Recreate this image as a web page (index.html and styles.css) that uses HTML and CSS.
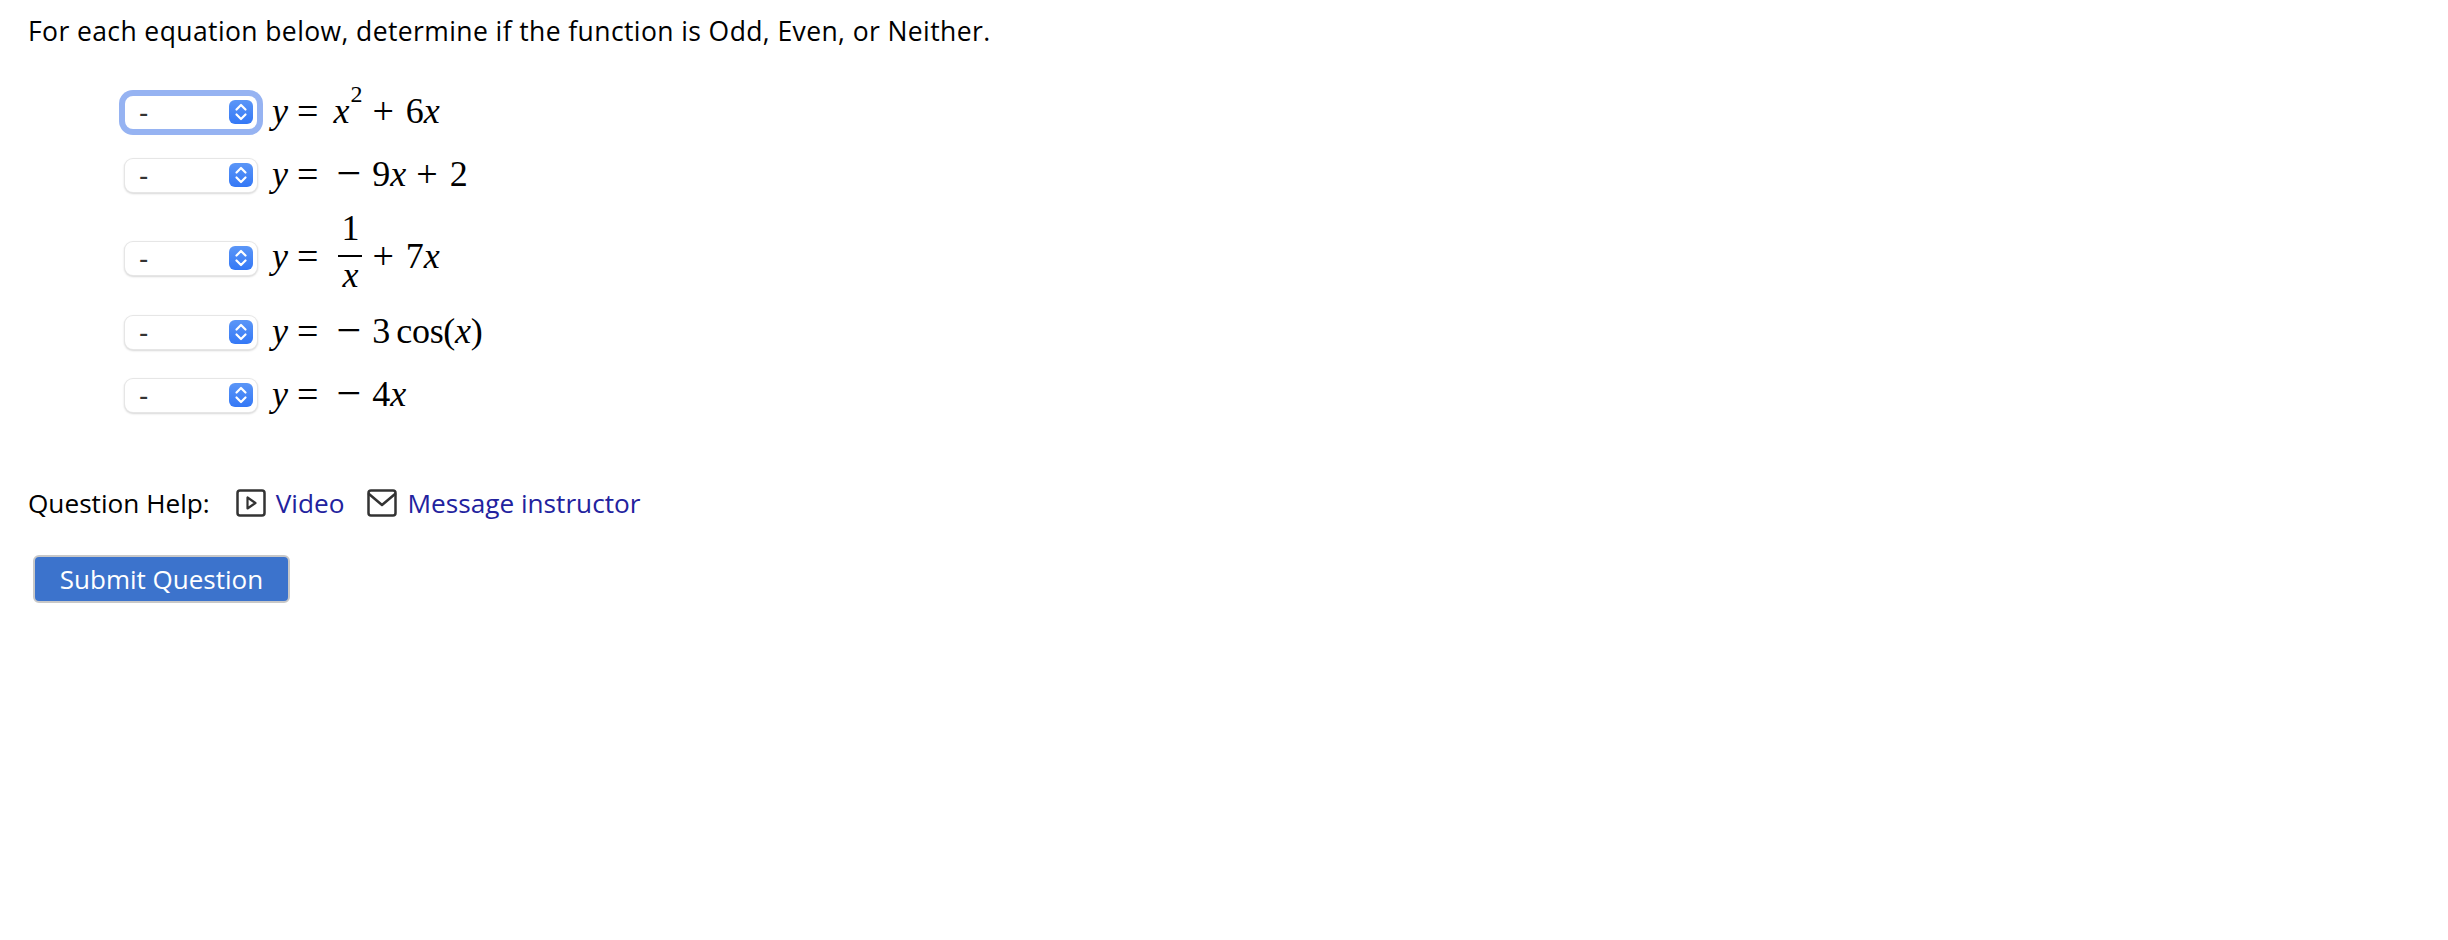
FILE: index.html
```html
<!DOCTYPE html>
<html lang="en">
<head>
<meta charset="utf-8">
<title>Question</title>
<link rel="stylesheet" href="styles.css">
</head>
<body>
<main class="page">
  <p class="prompt">For each equation below, determine if the function is Odd, Even, or Neither.</p>
  <ul class="eqs">
    <li class="eq">
      <span class="pick focused"><select><option>-</option></select><span class="stepper"><svg viewBox="0 0 24 24"><path d="M7.5 9.5 12 5l4.5 4.5M7.5 14.5 12 19l4.500-4.500"/></svg></span></span>
      <span class="math"><i>y</i><span class="rel">=</span><i>x</i><sup>2</sup><span class="bin">+</span>6<i>x</i></span>
    </li>
    <li class="eq">
      <span class="pick"><select><option>-</option></select><span class="stepper"><svg viewBox="0 0 24 24"><path d="M7.5 9.5 12 5l4.500 4.500M7.500 14.500 12 19l4.500-4.500"/></svg></span></span>
      <span class="math"><i>y</i><span class="rel">=</span><span class="neg">−</span>9<i>x</i><span class="bin">+</span>2</span>
    </li>
    <li class="eq tall">
      <span class="pick"><select><option>-</option></select><span class="stepper"><svg viewBox="0 0 24 24"><path d="M7.500 9.500 12 5l4.500 4.500M7.500 14.500 12 19l4.500-4.500"/></svg></span></span>
      <span class="math"><i>y</i><span class="rel">=</span><span class="frac"><span class="num">1</span><span class="den"><i>x</i></span></span><span class="bin">+</span>7<i>x</i></span>
    </li>
    <li class="eq">
      <span class="pick"><select><option>-</option></select><span class="stepper"><svg viewBox="0 0 24 24"><path d="M7.500 9.500 12 5l4.500 4.500M7.500 14.500 12 19l4.500-4.500"/></svg></span></span>
      <span class="math"><i>y</i><span class="rel">=</span><span class="neg">−</span>3<span class="fn">cos(<i>x</i>)</span></span>
    </li>
    <li class="eq">
      <span class="pick"><select><option>-</option></select><span class="stepper"><svg viewBox="0 0 24 24"><path d="M7.500 9.500 12 5l4.500 4.500M7.500 14.500 12 19l4.500-4.500"/></svg></span></span>
      <span class="math"><i>y</i><span class="rel">=</span><span class="neg">−</span>4<i>x</i></span>
    </li>
  </ul>
  <div class="help">
    <span class="help-label">Question Help:</span>
    <a class="help-link" href="#"><svg class="ico" viewBox="0 0 30 30"><rect x="1.500" y="2.500" width="27" height="25" rx="2.500"/><path class="play" d="M11.500 9.500v11l8-5.500z"/></svg>Video</a>
    <a class="help-link" href="#"><svg class="ico" viewBox="0 0 30 30"><rect x="1.500" y="2.500" width="27" height="25" rx="2.500"/><path d="M2 6l13 11L28 6"/></svg>Message instructor</a>
  </div>
  <button class="submit" type="button">Submit Question</button>
</main>
</body>
</html>
```
FILE: styles.css
```css
html, body { margin: 0; padding: 0; background: #fff; }
body { font-family: "Open Sans", "Noto Sans", sans-serif; color: #000; }
.page { padding: 13px 0 0 28px; }
.prompt { margin: 0; font-size: 26.5px; letter-spacing: 0.4px; line-height: 36px; }
.eqs { list-style: none; margin: 32px 0 0; padding: 0 0 0 97px; }
.eq { display: flex; align-items: center; height: 63px; }
.eq.tall { height: 86px; padding-top: 8px; }
.pick { position: relative; display: block; width: 132px; height: 33px; border-radius: 8px; background: #fff; box-shadow: 0 0 0 1px #e6e6e6, 0 1px 2px 1px #d8d8d8; }
.pick.focused { box-shadow: 0 0 0 6px #96b3f2; }
.pick select { appearance: none; -webkit-appearance: none; display: block; width: 100%; height: 100%; border: 0; outline: 0; background: transparent; padding: 0 0 0 14px; font: 28px "Liberation Sans", sans-serif; color: #333; }
.stepper { position: absolute; right: 4px; top: 4px; width: 24px; height: 24px; border-radius: 6px; background: linear-gradient(#5b96f7, #3478f6); }
.stepper svg { display: block; width: 24px; height: 24px; fill: none; stroke: #fff; stroke-width: 2.200; stroke-linecap: round; stroke-linejoin: round; }
.math { display: flex; align-items: center; margin: -4px 0 0 15px; font-family: "Liberation Serif", serif; font-size: 36px; line-height: 40px; white-space: pre; }
.math i { font-style: italic; }
.math sup { font-size: 24px; line-height: 1; align-self: flex-start; margin: -9px 0 0 1px; }
.rel { margin: 0 15px 0 9px; font-size: 38px; }
.bin { margin: 0 12px 0 10px; font-size: 38px; }
.neg { margin: 0 11px 0 3px; font-size: 44px; }
.fn { margin-left: 6px; letter-spacing: -0.3px; }
.frac { display: inline-flex; flex-direction: column; align-items: center; width: 24px; margin-left: 5px; }
.num { line-height: 34px; padding-bottom: 10px; border-bottom: 2px solid #000; width: 100%; text-align: center; }
.den { line-height: 36px; padding-bottom: 8px; }
.help { display: flex; align-items: center; margin-top: 58px; font-size: 26.2px; line-height: 36px; }
.help-label { margin-right: 26px; }
.help-link { display: inline-flex; align-items: center; color: #22229e; text-decoration: none; margin-right: 23px; }
.ico { width: 30px; height: 30px; margin-right: 10px; fill: none; stroke: #333; stroke-width: 2.500; stroke-linejoin: round; stroke-linecap: round; }
.ico .play { stroke-width: 2.200; }
.submit { display: block; margin: 34px 0 0 5px; width: 257px; height: 48px; padding: 0; border: 2px solid #c8c8c8; border-radius: 6px; background: #3c73cc; color: #fff; font: 26px "Open Sans", sans-serif; }
```
